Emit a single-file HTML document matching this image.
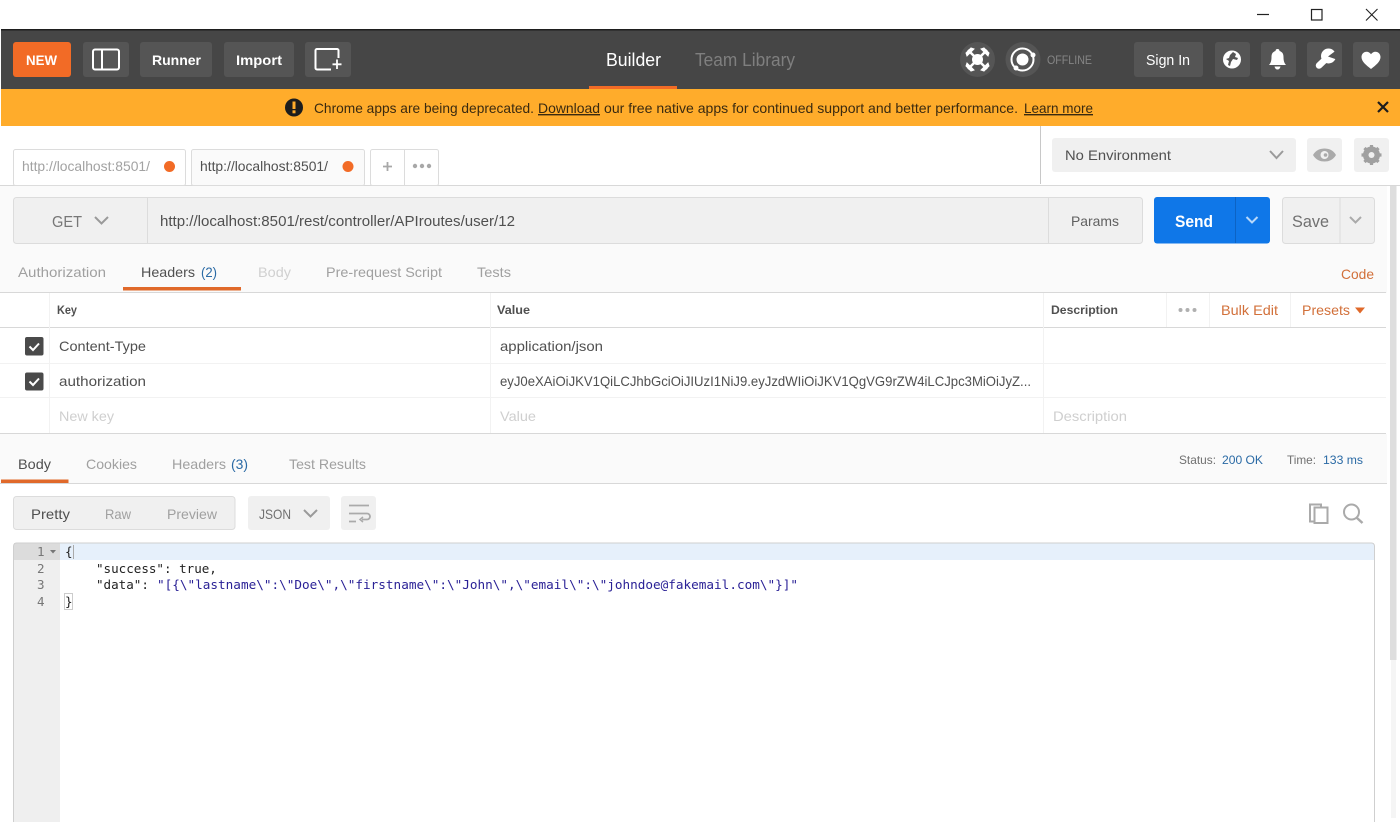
<!DOCTYPE html>
<html><head><meta charset="utf-8"><style>
html,body{margin:0;padding:0;background:#fff;width:1400px;height:822px;overflow:hidden}
svg{display:block;filter:blur(.3px)}
text{font-family:"Liberation Sans",sans-serif;font-size:14px;fill:#505050}
.m{font-family:"DejaVu Sans Mono","Liberation Mono",monospace;font-size:12.55px;fill:#222;white-space:pre}
.b{fill:#555;}
.l{fill:none;stroke:#9a9a9a;stroke-width:2}
.t{fill:#a0a0a0}.o{fill:#d2703a}.bl{fill:#2a6aa5}.ph{fill:#cfcfcf}
</style></head><body>
<svg width="1400" height="822" viewBox="0 0 1400 822" xmlns="http://www.w3.org/2000/svg">
<!-- title bar -->
<rect width="1400" height="29" fill="#fff"/>
<path d="M1257 14.500h12" stroke="#222" stroke-width="1.200"/>
<rect x="1311.500" y="9.500" width="10.500" height="10.500" fill="none" stroke="#222" stroke-width="1.200"/>
<path d="M1366 9l11.500 11.500M1377.500 9L1366 20.500" stroke="#222" stroke-width="1.100"/>
<!-- header -->
<rect x="1" y="29" width="1399" height="60" fill="#464646"/>
<rect x="1" y="29" width="1399" height="1.500" fill="#1e1e1e"/>
<rect x="13" y="42" width="58" height="35" rx="3" fill="#f26b26"/>
<text x="26" y="65" textLength="31" lengthAdjust="spacingAndGlyphs" style="font-weight:700;fill:#fff">NEW</text>
<rect x="83" y="42" width="46" height="35" rx="3" class="b"/>
<rect x="93" y="49.500" width="26" height="20" rx="2" fill="none" stroke="#fff" stroke-width="2"/>
<path d="M102 49.500v20" stroke="#fff" stroke-width="2"/>
<rect x="140" y="42" width="72" height="35" rx="3" class="b"/>
<text x="152" y="65" textLength="49" lengthAdjust="spacingAndGlyphs" style="font-weight:700;fill:#fff">Runner</text>
<rect x="224" y="42" width="70" height="35" rx="3" class="b"/>
<text x="236" y="65" textLength="46" lengthAdjust="spacingAndGlyphs" style="font-weight:700;fill:#fff">Import</text>
<rect x="305" y="42" width="46" height="35" rx="3" class="b"/>
<path d="M331 69.500h-14a1.500 1.500 0 0 1-1.500-1.500V50.500a1.500 1.500 0 0 1 1.500-1.500h20a1.500 1.500 0 0 1 1.500 1.500V58" fill="none" stroke="#fff" stroke-width="2"/>
<path d="M337 59.500v9.500M332.500 64.300h9" stroke="#fff" stroke-width="1.800"/>
<text x="606" y="66" textLength="55" lengthAdjust="spacingAndGlyphs" style="font-size:18px;fill:#fff">Builder</text>
<rect x="589" y="86" width="88" height="3" fill="#f26b26"/>
<text x="695" y="66" textLength="100" lengthAdjust="spacingAndGlyphs" style="font-size:18px;fill:#7f7f7f">Team Library</text>
<circle cx="977.500" cy="59.500" r="17.500" fill="#555"/>
<circle cx="977.500" cy="59.500" r="5.500" fill="#fff"/>
<path d="M968 50l19 19M987 50l-19 19" stroke="#fff" stroke-width="2.500"/>
<path d="M966 53l5-5 3 1-7 7zM989 53l-5-5-3 1 7 7zM966 66l5 5 3-1-7-7zM989 66l-5 5-3-1 7-7z" fill="#fff" stroke="#fff"/>
<circle cx="1023" cy="59.500" r="17.500" fill="#555"/>
<circle cx="1022.500" cy="59.500" r="6" fill="#fff"/>
<circle cx="1022.500" cy="59.500" r="11" fill="none" stroke="#fff" stroke-width="2"/>
<circle cx="1033" cy="55" r="2.500" fill="#fff"/><circle cx="1016" cy="68" r="2.500" fill="#fff"/>
<text x="1047" y="64" textLength="45" lengthAdjust="spacingAndGlyphs" style="font-size:12px;fill:#858585">OFFLINE</text>
<rect x="1134" y="42" width="69" height="35" rx="3" class="b"/>
<text x="1146" y="65" textLength="44" lengthAdjust="spacingAndGlyphs" style="font-size:15px;fill:#fff">Sign In</text>
<rect x="1215" y="42" width="35" height="35" rx="3" class="b"/>
<rect x="1261" y="42" width="35" height="35" rx="3" class="b"/>
<rect x="1307" y="42" width="35" height="35" rx="3" class="b"/>
<rect x="1353" y="42" width="36" height="35" rx="3" class="b"/>
<circle cx="1232" cy="59.500" r="9" fill="#fff"/>
<path d="M1233 52l3 2-1 3 3 1-1 2-4-1-2 3-1 4-2-1 1-4-3-2 3-1 1-3z" fill="#555"/>
<path d="M1277.500 49c-1.500 0-2 1-2 2-3 1-4 3-4 6 0 4-.8 6-2.500 8h17c-1.700-2-2.500-4-2.500-8 0-3-1-5-4-6 0-1-.5-2-2-2zM1274.500 66.500c.5 2 1.500 3 3 3s2.500-1 3-3z" fill="#fff"/>
<path d="M1329 56l-10 9.500" stroke="#fff" stroke-width="6.500" stroke-linecap="round"/>
<circle cx="1328.500" cy="56" r="7.500" fill="#fff"/>
<path d="M1328 56.500L1338 49v11z" fill="#555"/>
<path d="M1371 69c-5-4-9.500-7.500-9.500-12 0-3 2.300-5.300 5-5.300 2 0 3.500 1 4.500 2.500 1-1.500 2.500-2.500 4.500-2.500 2.700 0 5 2.300 5 5.300 0 4.500-4.500 8-9.500 12z" fill="#fff"/>
<!-- banner -->
<rect x="1" y="89" width="1399" height="37" fill="#ffac2b"/>
<circle cx="294" cy="107.500" r="9" fill="#1d1d1d"/>
<rect x="292.500" y="101.500" width="3" height="7.500" fill="#ffac2b"/><rect x="292.500" y="110.300" width="3" height="3" fill="#ffac2b"/>
<text x="314" y="113" textLength="220" lengthAdjust="spacingAndGlyphs" style="fill:#3a2a10">Chrome apps are being deprecated.</text>
<text x="538" y="113" textLength="62" lengthAdjust="spacingAndGlyphs" style="fill:#3a2a10;text-decoration:underline">Download</text>
<text x="604" y="113" textLength="414" lengthAdjust="spacingAndGlyphs" style="fill:#3a2a10">our free native apps for continued support and better performance.</text>
<text x="1024" y="113" textLength="69" lengthAdjust="spacingAndGlyphs" style="fill:#3a2a10;text-decoration:underline">Learn more</text>
<path d="M1378 102l10 10M1388 102l-10 10" stroke="#1d1d1d" stroke-width="2.200"/>
<!-- tabs -->
<rect x="0" y="185" width="1400" height="1" fill="#d8d8d8"/>
<rect x="13.500" y="149.500" width="172" height="36" rx="2" fill="#fff" stroke="#dcdcdc"/>
<text x="22" y="171" textLength="128" lengthAdjust="spacingAndGlyphs" style="font-size:14px;fill:#a2a2a2">http://localhost:8501/</text>
<circle cx="169.500" cy="166.500" r="5.500" fill="#f26b26"/>
<rect x="191.500" y="149.500" width="173" height="36" rx="2" fill="#fafafa" stroke="#dcdcdc"/>
<text x="200" y="171" textLength="128" lengthAdjust="spacingAndGlyphs" style="font-size:14px;fill:#505050">http://localhost:8501/</text>
<circle cx="348" cy="166.500" r="5.500" fill="#f26b26"/>
<rect x="370.500" y="149.500" width="68" height="36" rx="2" fill="#fff" stroke="#dcdcdc"/>
<path d="M404.500 150v35" stroke="#dcdcdc"/>
<path d="M383 166.500h9M387.500 162v9" stroke="#a8a8a8" stroke-width="1.800"/>
<circle cx="415" cy="166" r="2.200" fill="#a8a8a8"/><circle cx="422" cy="166" r="2.200" fill="#a8a8a8"/><circle cx="429" cy="166" r="2.200" fill="#a8a8a8"/>
<path d="M1040.500 126v58" stroke="#c8c8c8"/>
<rect x="1052" y="138" width="244" height="34" rx="3" fill="#f0f0f0"/>
<text x="1065" y="160" textLength="106" lengthAdjust="spacingAndGlyphs" style="font-size:14px">No Environment</text>
<path d="M1270 151l6.500 7 6.500-7" class="l"/>
<rect x="1307" y="138" width="35" height="34" rx="3" fill="#f0f0f0"/>
<path d="M1313 155c3-5 7-6.500 11.500-6.500s8.500 1.500 11.500 6.500c-3 5-7 6.500-11.500 6.500s-8.500-1.500-11.500-6.500z" fill="#aaa"/>
<circle cx="1324.500" cy="155" r="4" fill="#f0f0f0"/><circle cx="1325.500" cy="155" r="1.800" fill="#aaa"/>
<rect x="1354" y="138" width="35" height="34" rx="3" fill="#f0f0f0"/>
<circle cx="1371.500" cy="155" r="6.500" fill="none" stroke="#a0a0a0" stroke-width="4"/>
<path d="M1371.500 145v20M1361.500 155h20M1364.500 148l14 14M1378.500 148l-14 14" stroke="#a0a0a0" stroke-width="3.200"/>
<circle cx="1371.500" cy="155" r="3" fill="#f0f0f0"/>
<!-- request area -->
<rect x="0" y="186" width="1387" height="107" fill="#fafafa"/>
<rect x="1387" y="186" width="13" height="636" fill="#fff"/>
<rect x="1390" y="186" width="6.500" height="474" fill="#dedede"/>
<rect x="1391" y="660" width="5" height="158" fill="#f5f5f5"/>
<rect x="13.500" y="197.500" width="1129" height="46" rx="3" fill="#f0f0f0" stroke="#dcdcdc"/>
<path d="M147.500 198v45M1048.500 198v45" stroke="#dcdcdc"/>
<text x="52" y="227" textLength="30" lengthAdjust="spacingAndGlyphs" style="font-size:16px;fill:#777">GET</text>
<path d="M95 217l6.500 6.500 6.500-6.500" class="l"/>
<text x="160" y="226" textLength="355" lengthAdjust="spacingAndGlyphs" style="font-size:14.500px">http://localhost:8501/rest/controller/APIroutes/user/12</text>
<text x="1071" y="226" textLength="48" lengthAdjust="spacingAndGlyphs" style="font-size:14px;fill:#606060">Params</text>
<rect x="1154" y="197" width="116" height="46.500" rx="3" fill="#0f77e8"/>
<path d="M1235.500 197v46" stroke="#0c63c4"/>
<text x="1175" y="227" textLength="38" lengthAdjust="spacingAndGlyphs" style="font-size:17px;font-weight:700;fill:#fff">Send</text>
<path d="M1246.500 217l5.500 5.500 5.500-5.500" fill="none" stroke="#b8d8fa" stroke-width="2"/>
<rect x="1282.500" y="197.500" width="92" height="46" rx="3" fill="#f0f0f0" stroke="#dcdcdc"/>
<path d="M1340 198v45" stroke="#dcdcdc"/>
<text x="1292" y="227" textLength="37" lengthAdjust="spacingAndGlyphs" style="font-size:17px;fill:#707070">Save</text>
<path d="M1350 217l5.500 5.500 5.500-5.500" fill="none" stroke="#aaa" stroke-width="2"/>
<text x="18" y="277" textLength="88" lengthAdjust="spacingAndGlyphs" class="t">Authorization</text>
<text x="141" y="277" textLength="54" lengthAdjust="spacingAndGlyphs">Headers</text>
<text x="201" y="277" textLength="16" lengthAdjust="spacingAndGlyphs" class="bl">(2)</text>
<text x="258" y="277" textLength="33" lengthAdjust="spacingAndGlyphs" style="fill:#d0d0d0">Body</text>
<text x="326" y="277" textLength="116" lengthAdjust="spacingAndGlyphs" class="t">Pre-request Script</text>
<text x="477" y="277" textLength="34" lengthAdjust="spacingAndGlyphs" class="t">Tests</text>
<rect x="123" y="287" width="118" height="3.500" fill="#e0692a"/>
<text x="1341" y="279" textLength="33" lengthAdjust="spacingAndGlyphs" class="o">Code</text>
<!-- table -->
<rect x="0" y="292" width="1386" height="1" fill="#d8d8d8"/>
<rect x="0" y="327" width="1386" height="1" fill="#d8d8d8"/>
<rect x="0" y="363" width="1386" height="1" fill="#f2f2f2"/>
<rect x="0" y="397" width="1386" height="1" fill="#f2f2f2"/>
<rect x="0" y="433" width="1386" height="1" fill="#d8d8d8"/>
<path d="M49.500 293v140M490.500 293v140M1043.500 293v140M1166.500 293v34M1209.500 293v34M1290.500 293v34" stroke="#f2f2f2"/>
<text x="57" y="314" textLength="20" lengthAdjust="spacingAndGlyphs" style="font-size:12px;font-weight:700">Key</text>
<text x="497" y="314" textLength="33" lengthAdjust="spacingAndGlyphs" style="font-size:12px;font-weight:700">Value</text>
<text x="1051" y="314" textLength="67" lengthAdjust="spacingAndGlyphs" style="font-size:12px;font-weight:700">Description</text>
<circle cx="1180.500" cy="310" r="2" fill="#b0b0b0"/><circle cx="1187.500" cy="310" r="2" fill="#b0b0b0"/><circle cx="1194.500" cy="310" r="2" fill="#b0b0b0"/>
<text x="1221" y="315" textLength="57" lengthAdjust="spacingAndGlyphs" class="o">Bulk Edit</text>
<text x="1302" y="315" textLength="48" lengthAdjust="spacingAndGlyphs" class="o">Presets</text>
<path d="M1355 307.500h10l-5 6z" fill="#e0692a"/>
<rect x="25" y="337" width="18.500" height="18.500" rx="2" fill="#4a4a4a"/>
<path d="M29.500 346.500l3.500 3.500 6-6.500" fill="none" stroke="#fff" stroke-width="2"/>
<rect x="25" y="372.500" width="18.500" height="18" rx="2" fill="#4a4a4a"/>
<path d="M29.500 381.500l3.500 3.500 6-6.500" fill="none" stroke="#fff" stroke-width="2"/>
<text x="59" y="351" textLength="87" lengthAdjust="spacingAndGlyphs">Content-Type</text>
<text x="59" y="386" textLength="87" lengthAdjust="spacingAndGlyphs">authorization</text>
<text x="500" y="351" textLength="103" lengthAdjust="spacingAndGlyphs">application/json</text>
<text x="500" y="386" textLength="531" lengthAdjust="spacingAndGlyphs">eyJ0eXAiOiJKV1QiLCJhbGciOiJIUzI1NiJ9.eyJzdWIiOiJKV1QgVG9rZW4iLCJpc3MiOiJyZ...</text>
<text x="59" y="421" textLength="55" lengthAdjust="spacingAndGlyphs" class="ph">New key</text>
<text x="500" y="421" textLength="36" lengthAdjust="spacingAndGlyphs" class="ph">Value</text>
<text x="1053" y="421" textLength="74" lengthAdjust="spacingAndGlyphs" class="ph">Description</text>
<!-- response tabs -->
<rect x="0" y="434" width="1387" height="49" fill="#fafafa"/>
<rect x="0" y="483" width="1387" height="1" fill="#d8d8d8"/>
<text x="18" y="469" textLength="33" lengthAdjust="spacingAndGlyphs">Body</text>
<rect x="1" y="479.500" width="67.500" height="3.500" fill="#e0692a"/>
<text x="86" y="469" textLength="51" lengthAdjust="spacingAndGlyphs" class="t">Cookies</text>
<text x="172" y="469" textLength="54" lengthAdjust="spacingAndGlyphs" class="t">Headers</text>
<text x="231" y="469" textLength="17" lengthAdjust="spacingAndGlyphs" class="bl">(3)</text>
<text x="289" y="469" textLength="77" lengthAdjust="spacingAndGlyphs" class="t">Test Results</text>
<text x="1179" y="464" textLength="37" lengthAdjust="spacingAndGlyphs" style="font-size:12px;fill:#707070">Status:</text>
<text x="1222" y="464" textLength="41" lengthAdjust="spacingAndGlyphs" style="font-size:12px" class="bl">200 OK</text>
<text x="1287" y="464" textLength="29" lengthAdjust="spacingAndGlyphs" style="font-size:12px;fill:#707070">Time:</text>
<text x="1323" y="464" textLength="40" lengthAdjust="spacingAndGlyphs" style="font-size:12px" class="bl">133 ms</text>
<!-- response toolbar -->
<rect x="13.500" y="496.500" width="221.500" height="33" rx="3" fill="#f0f0f0" stroke="#dcdcdc"/>
<text x="31" y="519" textLength="39" lengthAdjust="spacingAndGlyphs">Pretty</text>
<text x="105" y="519" textLength="26" lengthAdjust="spacingAndGlyphs" class="t">Raw</text>
<text x="167" y="519" textLength="50" lengthAdjust="spacingAndGlyphs" class="t">Preview</text>
<rect x="248" y="496" width="82" height="34" rx="3" fill="#f0f0f0"/>
<text x="259" y="519" textLength="32" lengthAdjust="spacingAndGlyphs" style="fill:#707070">JSON</text>
<path d="M304 510l6.500 6.500 6.500-6.500" class="l"/>
<rect x="341" y="496" width="35" height="34" rx="3" fill="#f0f0f0"/>
<path d="M349 505.500h20M349 513.500h18a3 3 0 0 1 0 6h-5M349 521.500h7" fill="none" stroke="#aaa" stroke-width="1.800"/>
<path d="M363 517l-3 2.500 3 2.500" fill="none" stroke="#aaa" stroke-width="1.500"/>
<path d="M1316 521.500h-6v-17h11v3" fill="none" stroke="#aaa" stroke-width="2"/>
<rect x="1314.500" y="507.500" width="13" height="15.500" fill="#fff" stroke="#aaa" stroke-width="2"/>
<circle cx="1351.500" cy="512" r="7.500" fill="none" stroke="#aaa" stroke-width="2"/>
<path d="M1357 518l5.500 5" stroke="#aaa" stroke-width="2.500"/>
<!-- editor -->
<rect x="13.500" y="543" width="1361" height="279" fill="#fff"/>
<rect x="14" y="543" width="46" height="279" fill="#efefef"/>
<rect x="14" y="543" width="46" height="17" fill="#dcdcdc"/>
<rect x="60" y="543" width="1314" height="17" fill="#e6f0fb"/>
<path d="M13.500 822V546a3 3 0 0 1 3-3h1355a3 3 0 0 1 3 3v276" fill="none" stroke="#cfcfcf"/>
<text class="m" x="37" y="556" style="fill:#777">1</text>
<path d="M50 550h6l-3 3.500z" fill="#777"/>
<text class="m" x="37" y="573" style="fill:#777">2</text>
<text class="m" x="37" y="589" style="fill:#777">3</text>
<text class="m" x="37" y="606" style="fill:#777">4</text>
<text class="m" x="65" y="556">{</text>
<path d="M73.500 545v14" stroke="#aaa"/>
<text class="m" x="96" y="573">"success": true,</text>
<text class="m" x="96" y="589">"data":</text>
<text class="m" x="157" y="589" textLength="641" lengthAdjust="spacingAndGlyphs" style="fill:#2a2196">"[{\"lastname\":\"Doe\",\"firstname\":\"John\",\"email\":\"johndoe@fakemail.com\"}]"</text>
<rect x="64.500" y="593.500" width="8" height="16" fill="none" stroke="#ccc"/>
<text class="m" x="65" y="606">}</text>
</svg>
</body></html>
